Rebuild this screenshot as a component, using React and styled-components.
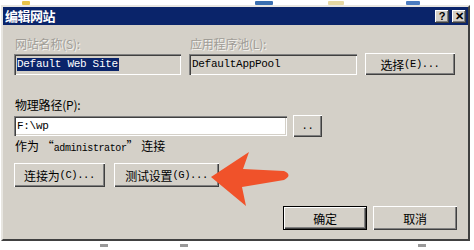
import React from 'react';
import styled, { createGlobalStyle } from 'styled-components';

const GlobalStyle = createGlobalStyle`
  html, body {
    margin: 0;
    padding: 0;
    background: #ffffff;
  }
  body {
    width: 474px;
    height: 250px;
    overflow: hidden;
    font-family: "Liberation Sans", "Noto Sans CJK SC", sans-serif;
  }
`;

const cjk = `"Noto Sans CJK SC", "Liberation Sans", sans-serif`;
const mono = `"Liberation Mono", "Noto Sans CJK SC", monospace`;

const Page = styled.div`
  width: 474px;
  height: 250px;
  display: flex;
  flex-direction: column;
  background: #ffffff;
`;

const TopStrip = styled.div`
  height: 5px;
  display: flex;
  align-items: flex-end;
  overflow: hidden;
`;

const Scrap = styled.span`
  display: block;
  width: ${(p) => p.w}px;
  height: 4px;
  margin-left: ${(p) => p.ml}px;
  background: ${(p) => p.c};
  border-radius: 1px;
`;

const Dialog = styled.div`
  width: 469px;
  height: 236px;
  margin-left: 1px;
  box-sizing: border-box;
  background: #d4d0c8;
  border: 2px solid;
  border-color: #e8e6e1 #404040 #404040 #e8e6e1;
  display: flex;
  flex-direction: column;
`;

const TitleBar = styled.div`
  height: 18px;
  background: #0a246a;
  display: flex;
  align-items: center;
  justify-content: space-between;
  padding: 0 2px;
`;

const Title = styled.span`
  color: #ffffff;
  font-family: ${cjk};
  font-weight: 700;
  font-size: 13px;
  line-height: 18px;
  letter-spacing: -0.5px;
`;

const Caps = styled.div`
  display: flex;
  gap: 3px;
`;

const CapButton = styled.div`
  width: 14px;
  height: 13px;
  background: #d4d0c8;
  box-shadow: inset -1px -1px 0 #404040, inset 1px 1px 0 #ffffff, inset -2px -2px 0 #808080;
  display: flex;
  align-items: center;
  justify-content: center;
  font-family: "Liberation Sans", sans-serif;
  font-weight: 700;
  font-size: 11px;
  line-height: 13px;
  color: #000;
`;

const Body = styled.div`
  flex: 1;
  display: flex;
  flex-direction: column;
  padding: 12px 11px 0 11px;
`;

const TopGrid = styled.div`
  display: grid;
  grid-template-columns: 167px 168px 90px;
  column-gap: 8px;
  grid-template-rows: 14px 22px;
  row-gap: 2px;
  align-items: center;
`;

const Label = styled.div`
  font-family: ${cjk};
  font-size: 12px;
  line-height: 14px;
  color: ${(p) => (p.disabled ? '#a09d97' : '#000000')};
  text-shadow: ${(p) => (p.disabled ? '1px 1px 0 #f4f3f0' : 'none')};
  padding-left: 1px;
  white-space: nowrap;
  letter-spacing: -0.2px;
`;

const Field = styled.div`
  box-sizing: border-box;
  height: ${(p) => p.h || 20}px;
  width: ${(p) => (p.w ? `${p.w}px` : 'auto')};
  background: ${(p) => (p.readOnly ? '#d4d0c8' : '#ffffff')};
  box-shadow: inset 1px 1px 0 #808080, inset 2px 2px 0 #404040, inset -1px -1px 0 #ffffff, inset -2px -2px 0 #d4d0c8;
  display: flex;
  align-items: center;
  padding: 0 3px;
  font-family: ${mono};
  font-size: 11px;
  color: #000;
  letter-spacing: -0.3px;
  white-space: nowrap;
  overflow: hidden;
`;

const Selected = styled.span`
  background: #0a246a;
  color: #ffffff;
  line-height: 13px;
  padding-right: 1px;
`;

const Button = styled.button`
  box-sizing: border-box;
  width: ${(p) => p.w}px;
  height: ${(p) => p.h || 23}px;
  margin: 0;
  padding: 0;
  background: #d4d0c8;
  border: ${(p) => (p.primary ? '1px solid #000000' : 'none')};
  box-shadow: inset 1px 1px 0 #ffffff, inset -1px -1px 0 #404040, inset -2px -2px 0 #808080;
  font-family: ${cjk};
  font-size: 12px;
  color: #000000;
  display: flex;
  align-items: center;
  justify-content: center;
  white-space: nowrap;
  letter-spacing: -0.2px;
`;

const Small = styled.span`
  font-family: ${mono};
  font-size: 10.5px;
  letter-spacing: -0.4px;
`;

const PathSection = styled.div`
  display: flex;
  flex-direction: column;
  margin-top: 23px;
  gap: 3px;
`;

const PathRow = styled.div`
  display: flex;
  align-items: center;
  gap: 6px;
`;

const Note = styled.div`
  font-family: ${cjk};
  font-size: 12px;
  line-height: 14px;
  color: #000;
  padding-left: 1px;
  margin-top: 2px;
`;

const NoteMono = styled.span`
  font-family: ${mono};
  font-size: 10px;
  letter-spacing: -0.4px;
`;

const ActionRow = styled.div`
  position: relative;
  display: flex;
  gap: 9px;
  margin-top: 7px;
`;

const Arrow = styled.svg`
  position: absolute;
  left: 181px;
  top: -12px;
`;

const FooterRow = styled.div`
  display: flex;
  justify-content: flex-end;
  gap: 6px;
  margin-top: 19px;
`;

const BottomStrip = styled.div`
  height: 9px;
  display: flex;
  align-items: flex-start;
  overflow: hidden;
`;

const Fragment = styled.span`
  display: block;
  width: ${(p) => p.w}px;
  height: 3px;
  margin-left: ${(p) => p.ml}px;
  margin-top: 3px;
  background: #555;
  opacity: 0.6;
`;

export default function App() {
  return (
    <>
      <GlobalStyle />
      <Page>
        <TopStrip>
          <Scrap w={8} ml={22} c="#e8c44a" />
          <Scrap w={18} ml={225} c="#3a6fb0" />
          <Scrap w={16} ml={55} c="#e6d8a2" />
          <Scrap w={14} ml={62} c="#4b7cc0" />
        </TopStrip>
        <Dialog>
          <TitleBar>
            <Title>编辑网站</Title>
            <Caps>
              <CapButton>?</CapButton>
              <CapButton>✕</CapButton>
            </Caps>
          </TitleBar>
          <Body>
            <TopGrid>
              <Label disabled>网站名称(S):</Label>
              <Label disabled>应用程序池(L):</Label>
              <span />
              <Field readOnly h={21}>
                <Selected>Default Web Site</Selected>
              </Field>
              <Field readOnly h={21}>DefaultAppPool</Field>
              <Button w={90} h={22}>
                选择<Small>(E)...</Small>
              </Button>
            </TopGrid>
            <PathSection>
              <Label>物理路径(P):</Label>
              <PathRow>
                <Field w={273} h={20}>F:\wp</Field>
                <Button w={29} h={22}>
                  <Small>..</Small>
                </Button>
              </PathRow>
            </PathSection>
            <Note>
              作为 “<NoteMono>administrator</NoteMono>” 连接
            </Note>
            <ActionRow>
              <Button w={91} h={24}>
                连接为<Small>(C)...</Small>
              </Button>
              <Button w={105} h={24}>
                测试设置<Small>(G)...</Small>
              </Button>
              <Arrow width="100" height="62" viewBox="197 150 100 62">
                <path
                  d="M213,176 L251,151 L245,168 L286,170 Q295,174 286,179 L244,186 L248,205 Z"
                  fill="#f0522a"
                />
              </Arrow>
            </ActionRow>
            <FooterRow>
              <Button w={84} h={24} primary>
                确定
              </Button>
              <Button w={84} h={24}>
                取消
              </Button>
            </FooterRow>
          </Body>
        </Dialog>
        <BottomStrip>
          <Fragment w={8} ml={100} />
          <Fragment w={8} ml={72} />
          <Fragment w={8} ml={230} />
        </BottomStrip>
      </Page>
    </>
  );
}
